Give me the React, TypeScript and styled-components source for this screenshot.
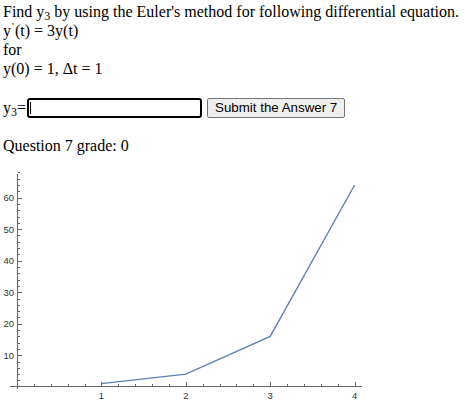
import styled, { createGlobalStyle } from 'styled-components';

const Global = createGlobalStyle`
  html, body {
    margin: 0;
    padding: 0;
    background: #fff;
    overflow: hidden;
  }
  body {
    font-family: 'Liberation Serif', 'Times New Roman', serif;
    font-size: 16px;
    color: #000;
  }
`;

const Page = styled.main`
  display: flex;
  flex-flow: column nowrap;
  padding: 2.4px 3px 0;
`;

const Sub = styled.sub`
  font-size: 12px;
  line-height: 0;
  vertical-align: -3px;
`;

const Prime = styled.sup`
  font-size: 11px;
  line-height: 0;
  vertical-align: 6px;
  margin: 0 1px;
`;

const Line = styled.div`
  line-height: 19px;
  white-space: nowrap;
`;

const AnswerRow = styled.div`
  display: flex;
  flex-flow: row nowrap;
  align-items: center;
  height: 20px;
  margin-top: 19.6px;
  line-height: 19px;
`;

const Field = styled.span`
  position: relative;
  display: inline-flex;
  margin-left: 1px;

  &::after {
    content: '';
    position: absolute;
    left: 3px;
    top: 4px;
    width: 1px;
    height: 12px;
    background: #000;
  }
`;

const AnswerInput = styled.input`
  box-sizing: border-box;
  width: 175px;
  height: 20px;
  padding: 1px 2px;
  border: 2px solid #000;
  border-radius: 3px;
  outline: none;
  font-family: 'Liberation Sans', Arial, sans-serif;
  font-size: 13.33px;
`;

const SubmitButton = styled.button`
  box-sizing: border-box;
  margin-left: 5px;
  height: 20px;
  padding: 0 7px;
  border: 1px solid #767676;
  border-radius: 2px;
  background: #efefef;
  color: #000;
  font-family: 'Liberation Sans', Arial, sans-serif;
  font-size: 13.33px;
  line-height: 18px;
`;

const Grade = styled.div`
  margin-top: 17.8px;
  line-height: 19px;
`;

const Chart = styled.svg`
  display: block;
  margin-top: 15.2px;
  margin-left: -3px;
`;

const X0 = 17;
const XU = 84.4;
const Y0 = 216.8;
const YU = 3.153;
const px = (x: number) => X0 + x * XU;
const py = (y: number) => Y0 - y * YU;

const data: [number, number][] = [
  [1, 1],
  [2, 4],
  [3, 16],
  [4, 64],
];

function Plot() {
  const xMinor: number[] = [];
  for (let i = 1; i <= 20; i++) xMinor.push(i * 0.2);
  const yMinor: number[] = [];
  for (let v = 2; v <= 68; v += 2) yMinor.push(v);

  return (
    <Chart width={370} height={235} viewBox='0 0 370 235'>
      <g stroke='#666' strokeWidth={1} shapeRendering='crispEdges'>
        <line x1={10} y1={216.5} x2={362} y2={216.5} />
        <line x1={17.5} y1={4} x2={17.5} y2={219} />
        {xMinor.map((x) => {
          const major = Math.abs(x - Math.round(x)) < 0.01;
          const X = Math.round(px(x)) + 0.5;
          return <line key={'x' + x} x1={X} y1={216} x2={X} y2={major ? 212 : 214} />;
        })}
        {yMinor.map((v) => {
          const major = v % 10 === 0;
          const Y = Math.round(py(v)) + 0.5;
          return <line key={'y' + v} x1={18} y1={Y} x2={major ? 22 : 20} y2={Y} />;
        })}
      </g>
      <g
        fill='#333'
        fontFamily="'Liberation Sans', Arial, sans-serif"
        fontSize={9.5}
      >
        {[1, 2, 3, 4].map((x) => (
          <text key={x} x={px(x)} y={229} textAnchor='middle'>
            {x}
          </text>
        ))}
        {[10, 20, 30, 40, 50, 60].map((v) => (
          <text key={v} x={14} y={py(v) + 3.5} textAnchor='end'>
            {v}
          </text>
        ))}
      </g>
      <polyline
        points={data.map(([x, y]) => `${px(x)},${py(y)}`).join(' ')}
        fill='none'
        stroke='#5E81B5'
        strokeWidth={1.4}
      />
    </Chart>
  );
}

function App() {
  return (
    <>
      <Global />
      <Page>
        <Line>
          Find y<Sub>3</Sub> by using the Euler's method for following differential equation.
        </Line>
        <Line>
          y<Prime>'</Prime>(t) = 3y(t)
        </Line>
        <Line>for</Line>
        <Line>y(0) = 1, Δt = 1</Line>
        <AnswerRow>
          <span>
            y<Sub>3</Sub>=
          </span>
          <Field>
            <AnswerInput type='text' />
          </Field>
          <SubmitButton type='button'>Submit the Answer 7</SubmitButton>
        </AnswerRow>
        <Grade>Question 7 grade: 0</Grade>
        <Plot />
      </Page>
    </>
  );
}

export default App;
